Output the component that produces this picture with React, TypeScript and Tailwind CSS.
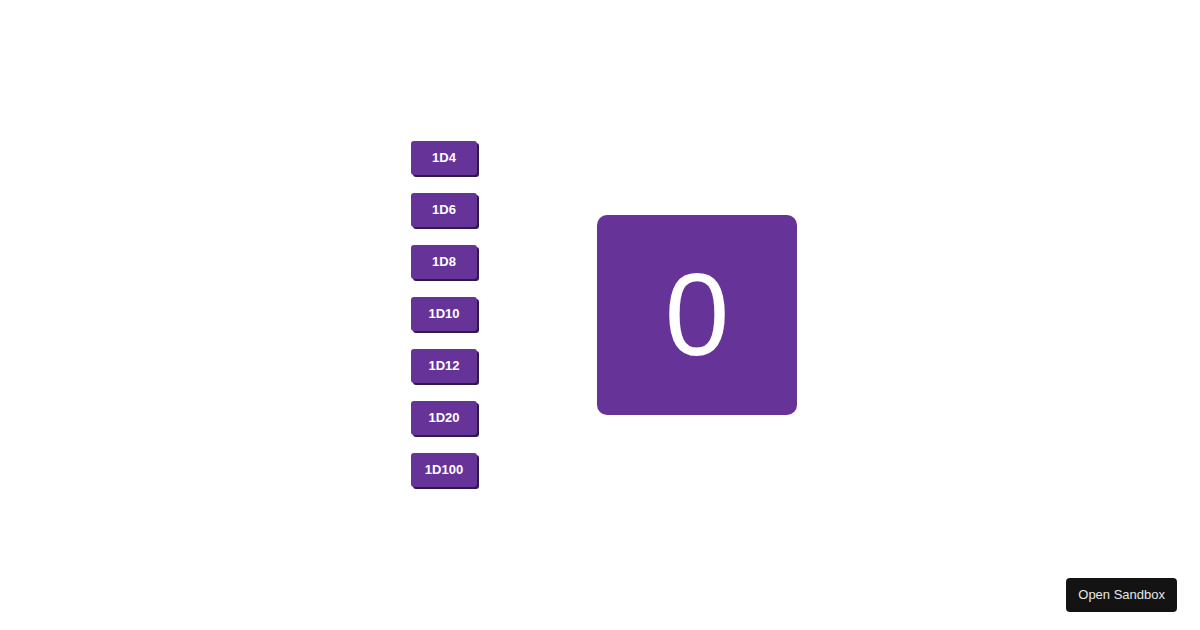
const dice = ["1D4", "1D6", "1D8", "1D10", "1D12", "1D20", "1D100"];

export default function App() {
  return (
    <div className="relative flex h-[630px] w-full items-center justify-center bg-white pl-[8px]" style={{ fontFamily: '"Liberation Sans", Arial, sans-serif' }}>
      <div className="mb-[2px] flex items-center gap-[120px]">
        <div className="flex flex-col gap-[18px]">
          {dice.map((d) => (
            <button
              key={d}
              type="button"
              className="h-[34px] w-[66px] rounded-[3px] bg-[#663399] text-[13px] font-bold text-white shadow-[2px_2px_0_#2e1a4a]"
            >
              {d}
            </button>
          ))}
        </div>
        <div className="mt-[2px] flex h-[200px] w-[200px] items-center justify-center rounded-[10px] bg-[#663399] text-[116px] leading-none text-white">
          0
        </div>
      </div>
      <button
        type="button"
        className="absolute bottom-[18px] right-[23px] h-[34px] rounded-[4px] bg-[#131313] px-[12px] text-[13px] text-white/90"
      >
        Open Sandbox
      </button>
    </div>
  );
}
